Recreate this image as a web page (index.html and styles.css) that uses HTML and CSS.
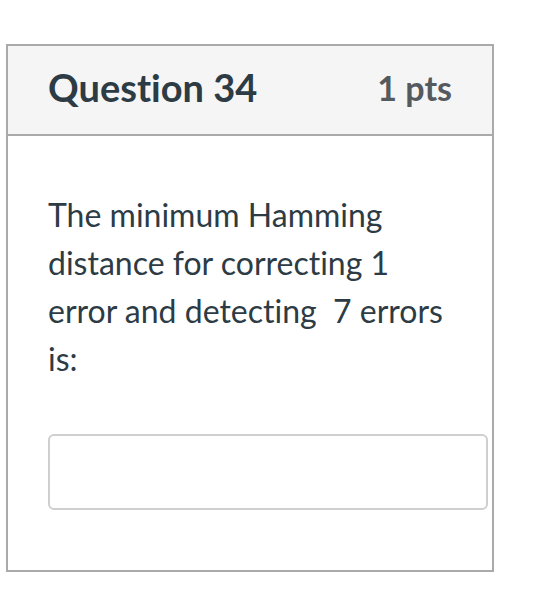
FILE: index.html
```html
<!DOCTYPE html>
<html>
<head>
<meta charset="utf-8">
<link rel="stylesheet" href="styles.css">
</head>
<body>
<div class="page">
  <div class="card">
    <div class="card-header">
      <span class="title">Question 34</span>
      <span class="pts">1 pts</span>
    </div>
    <div class="card-body">
      <p class="question">The minimum Hamming distance for correcting 1 error and detecting&nbsp; 7 errors is:</p>
      <div class="answer"></div>
    </div>
  </div>
</div>
</body>
</html>
```
FILE: styles.css
```css
html, body {
  margin: 0;
  padding: 0;
  background: #ffffff;
}
.page {
  padding: 44px 0 0 6px;
  font-family: Lato, "Open Sans", sans-serif;
  color: #2d3b45;
  font-variant-ligatures: none;
}
.card {
  width: 484px;
  border: 2px solid #aaaaaa;
}
.card-header {
  height: 90px;
  background: #f5f5f5;
  border-bottom: 2px solid #aaaaaa;
  display: flex;
  align-items: center;
  justify-content: space-between;
  padding: 0 40px 6px 40px;
  box-sizing: border-box;
}
.title {
  font-size: 38px;
  font-weight: 700;
  color: #2d3b45;
}
.pts {
  font-size: 34px;
  font-weight: 700;
  color: #555a5f;
}
.card-body {
  padding: 55px 4px 60px 40px;
}
.question {
  margin: 0;
  font-size: 32px;
  line-height: 48px;
  width: 405px;
}
.answer {
  margin-top: 51px;
  width: 436px;
  height: 72px;
  border: 2px solid #cfcfcf;
  border-radius: 6px;
}
```
